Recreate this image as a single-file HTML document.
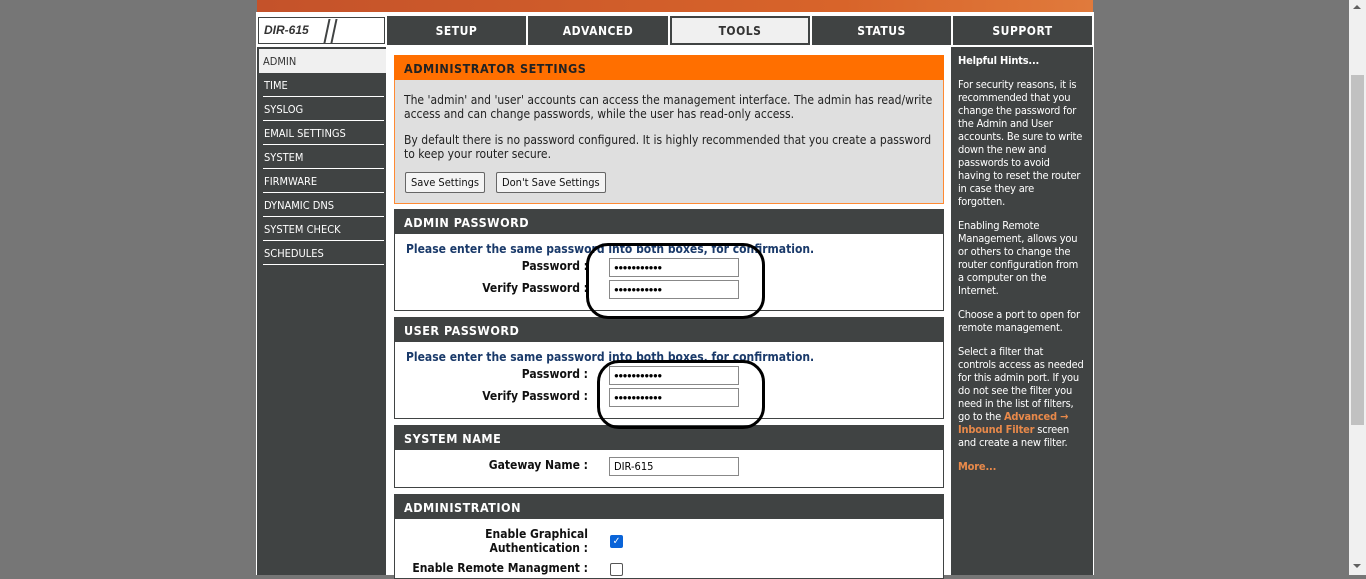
<!DOCTYPE html>
<html><head><meta charset="utf-8"><style>
*{box-sizing:border-box;margin:0;padding:0}
body{width:1366px;height:575px;overflow:hidden;background:#767676;font-family:Tahoma,"DejaVu Sans Condensed","Liberation Sans",sans-serif;font-size:12px;position:relative}
.a{position:absolute}
.tab{position:absolute;top:16px;height:29px;background:#404343;color:#fff;font-weight:bold;font-size:12px;letter-spacing:.5px;text-align:center;line-height:30px;border-left:2px solid #fff}
.nav{position:absolute;left:263px;width:121px;height:24px;color:#fff;font-size:11px;line-height:25px;border-bottom:1px solid #fff;padding-left:1px}
.hd{position:absolute;left:394px;width:550px;height:25px;background:#404343;color:#fff;font-weight:bold;font-size:12.5px;letter-spacing:.5px;line-height:27px;padding-left:10px}
.bd{position:absolute;left:394px;width:550px;background:#fff;border:1px solid #404343;border-top:none}
.lb{position:absolute;width:300px;left:288px;text-align:right;font-weight:bold;color:#111}
.in{position:absolute;left:609px;width:130px;height:19px;border:1px solid #888;background:#fff;font-size:11px;padding-left:4px;line-height:17px}
.pw{font-size:8px;letter-spacing:-0.5px;line-height:17px;font-family:"Liberation Sans",sans-serif}
.btn{position:absolute;top:172px;height:21px;border:1px solid #666;border-radius:2px;background:#f4f4f4;font-size:11px;line-height:19px;padding:0 5px;color:#111}
.ov{position:absolute;border:3px solid #000;border-radius:22px}
.h{white-space:nowrap}
</style></head><body>
<div class="a" style="left:257px;top:0;width:836px;height:12px;background:linear-gradient(90deg,#c4522a,#d8642a 70%,#e07a3c)"></div>
<div class="a" style="left:256px;top:12px;width:838px;height:563px;background:#fff"></div>
<div class="a" style="left:258px;top:17px;width:127px;height:27px;background:#fff;border:1px solid #404343"></div>
<div class="a" style="left:264px;top:23px;font-style:italic;font-weight:bold;font-size:12px;color:#333;font-family:'Liberation Sans',sans-serif">DIR-615</div>
<div class="a" style="left:320px;top:19px;width:8px;height:24px;border-right:2px solid #404343;transform:skewX(-12deg)"></div>
<div class="a" style="left:327px;top:19px;width:8px;height:24px;border-right:2px solid #404343;transform:skewX(-12deg)"></div>
<div class="tab" style="left:385px;width:141px">SETUP</div>
<div class="tab" style="left:526px;width:142px">ADVANCED</div>
<div class="tab" style="left:668px;width:142px;background:#404343"><div style="position:absolute;left:2px;top:2px;right:2px;bottom:2px;background:#f0f0f0;color:#333;line-height:27px">TOOLS</div></div>
<div class="tab" style="left:810px;width:141px">STATUS</div>
<div class="tab" style="left:951px;width:142px;border-right:1px solid #fff">SUPPORT</div>
<div class="a" style="left:257px;top:47px;width:129px;height:528px;background:#404343"></div>
<div class="a" style="left:259px;top:49px;width:127px;height:24px;background:#f0f0f0;color:#333;font-size:11px;line-height:25px;padding-left:4px">ADMIN</div>
<div class="nav" style="top:73px">TIME</div>
<div class="nav" style="top:97px">SYSLOG</div>
<div class="nav" style="top:121px">EMAIL SETTINGS</div>
<div class="nav" style="top:145px">SYSTEM</div>
<div class="nav" style="top:169px">FIRMWARE</div>
<div class="nav" style="top:193px">DYNAMIC DNS</div>
<div class="nav" style="top:217px">SYSTEM CHECK</div>
<div class="nav" style="top:241px">SCHEDULES</div>
<div class="a h" style="left:951px;top:47px;width:142px;height:528px;background:#404343;color:#fff;font-size:11px;letter-spacing:-0.2px;line-height:13px;padding:7px 4px 0 7px;overflow:hidden">
<div style="font-weight:bold;margin-bottom:11px">Helpful Hints...</div>
<div style="margin-bottom:11px">For security reasons, it is<br>recommended that you<br>change the password for<br>the Admin and User<br>accounts. Be sure to write<br>down the new and<br>passwords to avoid<br>having to reset the router<br>in case they are<br>forgotten.</div>
<div style="margin-bottom:11px">Enabling Remote<br>Management, allows you<br>or others to change the<br>router configuration from<br>a computer on the<br>Internet.</div>
<div style="margin-bottom:11px">Choose a port to open for<br>remote management.</div>
<div style="margin-bottom:11px">Select a filter that<br>controls access as needed<br>for this admin port. If you<br>do not see the filter you<br>need in the list of filters,<br>go to the <b style="color:#e8894a">Advanced →</b><br><b style="color:#e8894a">Inbound Filter</b> screen<br>and create a new filter.</div>
<div style="font-weight:bold;color:#e8894a">More...</div>
</div>
<div class="a" style="left:394px;top:55px;width:550px;height:149px;background:#dfdfdf;border:1px solid #ff8a33"></div>
<div class="a" style="left:394px;top:55px;width:550px;height:25px;background:#ff6f00;color:#222;font-weight:bold;font-size:12.5px;letter-spacing:.5px;line-height:27px;padding-left:10px">ADMINISTRATOR SETTINGS</div>
<div class="a" style="left:404px;top:93px;width:530px;line-height:14px;color:#222">The 'admin' and 'user' accounts can access the management interface. The admin has read/write access and can change passwords, while the user has read-only access.</div>
<div class="a" style="left:404px;top:133px;width:530px;line-height:14px;color:#222">By default there is no password configured. It is highly recommended that you create a password to keep your router secure.</div>
<div class="btn" style="left:405px">Save Settings</div>
<div class="btn" style="left:496px">Don't Save Settings</div>
<div class="hd" style="top:209px">ADMIN PASSWORD</div>
<div class="bd" style="top:234px;height:77px"></div>
<div class="a" style="left:406px;top:242px;font-weight:bold;color:#1a3a6a">Please enter the same password into both boxes, for confirmation.</div>
<div class="lb" style="top:259px">Password :</div><div class="in pw" style="top:258px">●●●●●●●●●●●</div>
<div class="lb" style="top:281px">Verify Password :</div><div class="in pw" style="top:280px">●●●●●●●●●●●</div>
<div class="hd" style="top:317px">USER PASSWORD</div>
<div class="bd" style="top:342px;height:77px"></div>
<div class="a" style="left:406px;top:350px;font-weight:bold;color:#1a3a6a">Please enter the same password into both boxes, for confirmation.</div>
<div class="lb" style="top:367px">Password :</div><div class="in pw" style="top:366px">●●●●●●●●●●●</div>
<div class="lb" style="top:389px">Verify Password :</div><div class="in pw" style="top:388px">●●●●●●●●●●●</div>
<div class="hd" style="top:425px">SYSTEM NAME</div>
<div class="bd" style="top:450px;height:38px"></div>
<div class="lb" style="top:458px">Gateway Name :</div><div class="in" style="top:457px">DIR-615</div>
<div class="hd" style="top:494px">ADMINISTRATION</div>
<div class="bd" style="top:519px;height:60px"></div>
<div class="lb" style="top:527px;line-height:14px">Enable Graphical<br>Authentication :</div>
<div class="a" style="left:610px;top:535px;width:13px;height:13px;background:#0a64d8;border-radius:2px;color:#fff;font-size:10px;line-height:13px;text-align:center;font-weight:bold">✓</div>
<div class="lb" style="top:561px">Enable Remote Managment :</div>
<div class="a" style="left:610px;top:563px;width:13px;height:13px;border:1px solid #555;border-radius:2px;background:#fff"></div>
<div class="ov" style="left:586px;top:243px;width:179px;height:76px"></div>
<div class="ov" style="left:597px;top:360px;width:168px;height:69px"></div>
<div class="a" style="left:1349px;top:0;width:17px;height:575px;background:#f0f0f0"></div>
<div class="a" style="left:1351px;top:75px;width:13px;height:350px;background:#c1c1c1"></div>
<div class="a" style="left:1353px;top:5px;width:0;height:0;border:4px solid transparent;border-bottom:4px solid #606060;border-top:none"></div>
<div class="a" style="left:1353px;top:564px;width:0;height:0;border:4px solid transparent;border-top:4px solid #606060;border-bottom:none"></div>
</body></html>
